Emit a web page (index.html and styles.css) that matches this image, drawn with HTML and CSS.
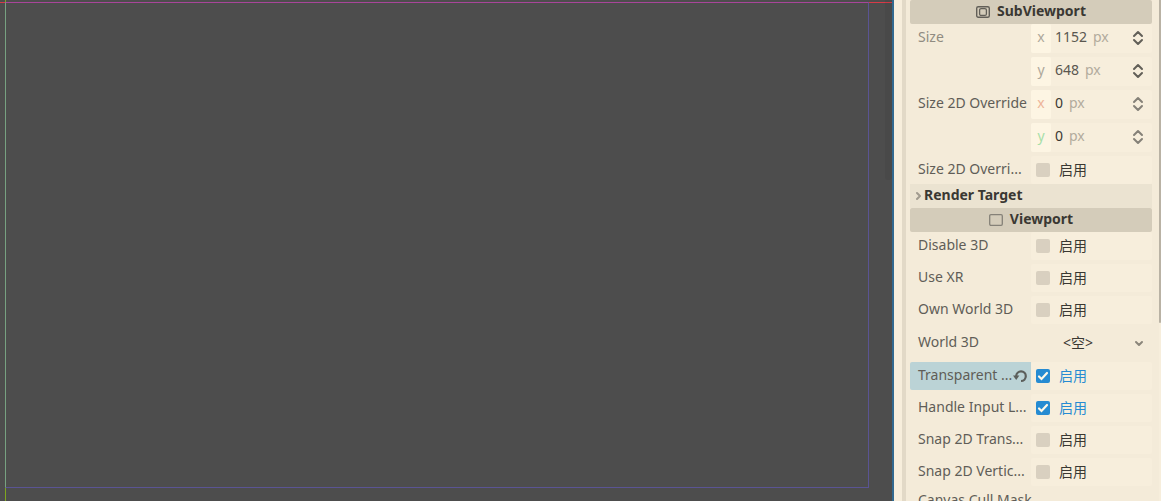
FILE: index.html
```html
<!DOCTYPE html>
<html lang="zh-CN">
<head>
  <meta charset="UTF-8" />
  <meta name="viewport" content="width=device-width, initial-scale=1.0" />
  <title>SubViewport</title>
  <link rel="stylesheet" href="styles.css">
</head>
<body>
  <svg class="symbols" aria-hidden="true">
    <symbol id="updown" viewBox="0 0 12 16">
      <path d="M2 6l4-4 4 4M2 10l4 4 4-4" fill="none" stroke="currentColor" stroke-width="2" stroke-linecap="round" stroke-linejoin="round" />
    </symbol>
  </svg>
  <div class="editor">
    <main class="canvas">
      <div class="axis-x"></div>
      <div class="axis-y"></div>
      <div class="frame"></div>
      <div class="canvas-scroll"></div>
    </main>
    <aside class="dock">
      <div class="inspector">
        <h2 class="category">
          <svg width="14" height="14" viewBox="0 0 14 14" fill="none" stroke="#625f58">
            <rect x="0.7" y="1.7" width="12.6" height="10.6" rx="1.5" stroke-width="1.4" />
            <rect x="3.6" y="3.6" width="6.8" height="6.8" rx="1.5" stroke-width="1.3" />
          </svg>
          SubViewport
        </h2>
        <div class="property readonly">
          <div class="name">Size</div>
          <div class="vector">
            <div class="field spin">
              <label class="axis" for="sizeX">x</label>
              <input class="digits-4" id="sizeX" type="text" value="1152" readonly>
              <span class="unit">px</span>
              <button type="button" aria-label="Size x"><svg width="12" height="16"><use href="#updown" /></svg></button>
            </div>
            <div class="field spin">
              <label class="axis" for="sizeY">y</label>
              <input class="digits-3" id="sizeY" type="text" value="648" readonly>
              <span class="unit">px</span>
              <button type="button" aria-label="Size y"><svg width="12" height="16"><use href="#updown" /></svg></button>
            </div>
          </div>
        </div>
        <div class="property">
          <div class="name">Size 2D Override</div>
          <div class="vector">
            <div class="field spin">
              <label class="axis red" for="overrideX">x</label>
              <input class="digits-1" id="overrideX" type="text" value="0">
              <span class="unit">px</span>
              <button type="button" aria-label="Size 2D Override x"><svg width="12" height="16"><use href="#updown" /></svg></button>
            </div>
            <div class="field spin">
              <label class="axis green" for="overrideY">y</label>
              <input class="digits-1" id="overrideY" type="text" value="0">
              <span class="unit">px</span>
              <button type="button" aria-label="Size 2D Override y"><svg width="12" height="16"><use href="#updown" /></svg></button>
            </div>
          </div>
        </div>
        <div class="property">
          <div class="name">Size 2D Overri...</div>
          <label class="field check"><input type="checkbox"><span>启用</span></label>
        </div>
        <button type="button" class="group">
          <svg width="6" height="10" viewBox="0 0 6 10"><path d="M2 2l3 3-3 3" fill="none" stroke="#a19b8f" stroke-width="2" stroke-linecap="round" stroke-linejoin="round" /></svg>
          Render Target
        </button>
        <h2 class="category">
          <svg width="14" height="14" viewBox="0 0 14 14" fill="none" stroke="#858178">
            <rect x="0.7" y="1.7" width="12.6" height="10.6" rx="1.2" stroke-width="1.3" />
          </svg>
          Viewport
        </h2>
        <div class="property">
          <div class="name">Disable 3D</div>
          <label class="field check"><input type="checkbox"><span>启用</span></label>
        </div>
        <div class="property">
          <div class="name">Use XR</div>
          <label class="field check"><input type="checkbox"><span>启用</span></label>
        </div>
        <div class="property">
          <div class="name">Own World 3D</div>
          <label class="field check"><input type="checkbox"><span>启用</span></label>
        </div>
        <div class="property object">
          <label class="name" for="world3d">World 3D</label>
          <div class="resource">
            <select id="world3d">
              <option>&lt;空&gt;</option>
            </select>
            <svg width="10" height="8" viewBox="0 0 10 8"><path d="M2 3l3 3 3-3" fill="none" stroke="#8b867b" stroke-width="2" stroke-linecap="round" stroke-linejoin="round" /></svg>
          </div>
        </div>
        <div class="property selected">
          <div class="name">
            <span>Transparent ...</span>
            <button type="button" class="revert" aria-label="Revert">
              <svg width="14" height="14" viewBox="0 0 14 14">
                <path d="M3.2 8V7a4.8 4.8 0 1 1 4.8 5" fill="none" stroke="#5c5f5c" stroke-width="2.2" />
                <path d="M0 6.5h6.4L3.2 11z" fill="#5c5f5c" />
              </svg>
            </button>
          </div>
          <label class="field check"><input type="checkbox" checked><span>启用</span></label>
        </div>
        <div class="property">
          <div class="name">Handle Input L...</div>
          <label class="field check"><input type="checkbox" checked><span>启用</span></label>
        </div>
        <div class="property">
          <div class="name">Snap 2D Trans...</div>
          <label class="field check"><input type="checkbox"><span>启用</span></label>
        </div>
        <div class="property">
          <div class="name">Snap 2D Vertic...</div>
          <label class="field check"><input type="checkbox"><span>启用</span></label>
        </div>
        <div class="property layers">
          <div class="name">Canvas Cull Mask</div>
        </div>
      </div>
      <div class="scrollbar"></div>
    </aside>
  </div>
</body>
</html>
```
FILE: styles.css
```css
* {
  box-sizing: border-box;
}
body {
  margin: 0;
  font-family: "Noto Sans", "Noto Sans CJK SC", sans-serif;
  font-size: 14px;
  line-height: 20px;
  color: #3a3833;
  overflow: hidden;
}
button, input, select {
  margin: 0;
  padding: 0;
  border: 0;
  background: none;
  font: inherit;
  color: inherit;
}
svg {
  display: block;
  flex: none;
}
.symbols {
  display: none;
}
.editor {
  display: grid;
  grid-template-columns: 1fr 269px;
  height: 100vh;
}

/* 2D canvas */
.canvas {
  position: relative;
  background: #4d4d4d;
  overflow: hidden;
}
.axis-x {
  position: absolute;
  top: 2px;
  left: 0;
  right: 0;
  height: 1px;
  background: #d83a48;
}
.axis-y {
  position: absolute;
  top: 0;
  bottom: 0;
  left: 5px;
  width: 1px;
  background: #7fa61f;
}
.frame {
  position: absolute;
  top: 2px;
  right: 23px;
  bottom: 13px;
  left: 5px;
  border: 1px solid #5a5493;
  border-top-color: #a9459a;
  border-left-color: #77a181;
}
.canvas-scroll {
  position: absolute;
  top: 0;
  right: 0;
  width: 7px;
  height: 180px;
  background: rgba(0, 0, 0, 0.05);
  border-radius: 0 0 3px 3px;
}

/* Inspector */
.dock {
  display: flex;
  border-left: 2px solid #33698f;
  background: #f7eedc;
  overflow: hidden;
}
.inspector {
  flex: 1;
  min-width: 0;
  margin-left: 8px;
  padding: 0 7px 0 4px;
  border-left: 4px solid #e2d9c7;
  background: #f4ebd9;
}
.scrollbar {
  width: 2px;
  height: 323px;
  background: #b9b2a4;
  border-radius: 0 0 1px 1px;
}
.category {
  display: flex;
  align-items: center;
  justify-content: center;
  gap: 7px;
  height: 24px;
  margin: 0;
  padding-bottom: 2px;
  font-size: 14px;
  font-weight: 700;
  background: #d4ccba;
  border-radius: 2px;
}
.category svg {
  margin-top: 2px;
}
.group {
  display: flex;
  align-items: center;
  gap: 3px;
  width: 100%;
  height: 24px;
  padding: 0 5px 2px;
  font-weight: 700;
  background: #ebe3d1;
}
.group svg {
  margin-top: 2px;
}
.property {
  display: grid;
  grid-template-columns: 1fr 1fr;
  white-space: nowrap;
}
.property + .property {
  margin-top: 4px;
}
.name {
  display: flex;
  align-items: flex-start;
  padding: 3px 0 0 8px;
  color: #605d57;
}
.readonly .name {
  color: #908b81;
}
.object .name {
  padding-top: 4px;
}
.layers .name {
  padding-top: 0;
}
.selected .name {
  background: #bbd3d6;
  border-radius: 2px 0 0 2px;
}
.revert {
  margin: 4px 0 0 1px;
}
.vector {
  display: grid;
  gap: 4px;
}
.field {
  display: flex;
  align-items: center;
  background: #f7eedc;
  border-radius: 2px;
}
.spin {
  height: 29px;
  padding-right: 8px;
}
.axis {
  width: 20px;
  height: 29px;
  padding-top: 3px;
  text-align: center;
  background: #fdf5e3;
  border-radius: 2px;
  color: #aea89b;
}
.red {
  color: #edb498;
}
.green {
  color: #a8dfa9;
}
.spin input {
  height: 20px;
  margin: 0 6px 3px 4px;
  outline: none;
}
.digits-1 {
  width: 8px;
}
.digits-3 {
  width: 24px;
}
.digits-4 {
  width: 32px;
}
.readonly input {
  color: #5a5750;
}
.unit {
  margin-bottom: 3px;
  color: #b2ab9d;
}
.spin button {
  margin: 0 0 2px auto;
  color: #858178;
}
.readonly button {
  color: #625f58;
}
.check {
  gap: 9px;
  height: 28px;
  padding-left: 5px;
}
.check input {
  appearance: none;
  width: 14px;
  height: 14px;
  background: #d9d0c0;
  border-radius: 2px;
}
.check input:checked {
  background: #268bd2 url("data:image/svg+xml,%3Csvg xmlns='http://www.w3.org/2000/svg' viewBox='0 0 14 14'%3E%3Cpath d='M3 7.5l2.5 2.5L11 4' fill='none' stroke='%23fff8e8' stroke-width='2.2' stroke-linecap='round'/%3E%3C/svg%3E");
}
.check span {
  margin-bottom: 1px;
}
.check input:checked + span {
  color: #268bd2;
}
.resource {
  display: flex;
  align-items: center;
  height: 30px;
  padding-right: 8px;
}
.resource select {
  flex: 1;
  height: 28px;
  padding-left: 32px;
  margin-right: -10px;
  appearance: none;
  outline: none;
}
.resource svg {
  pointer-events: none;
}
```
